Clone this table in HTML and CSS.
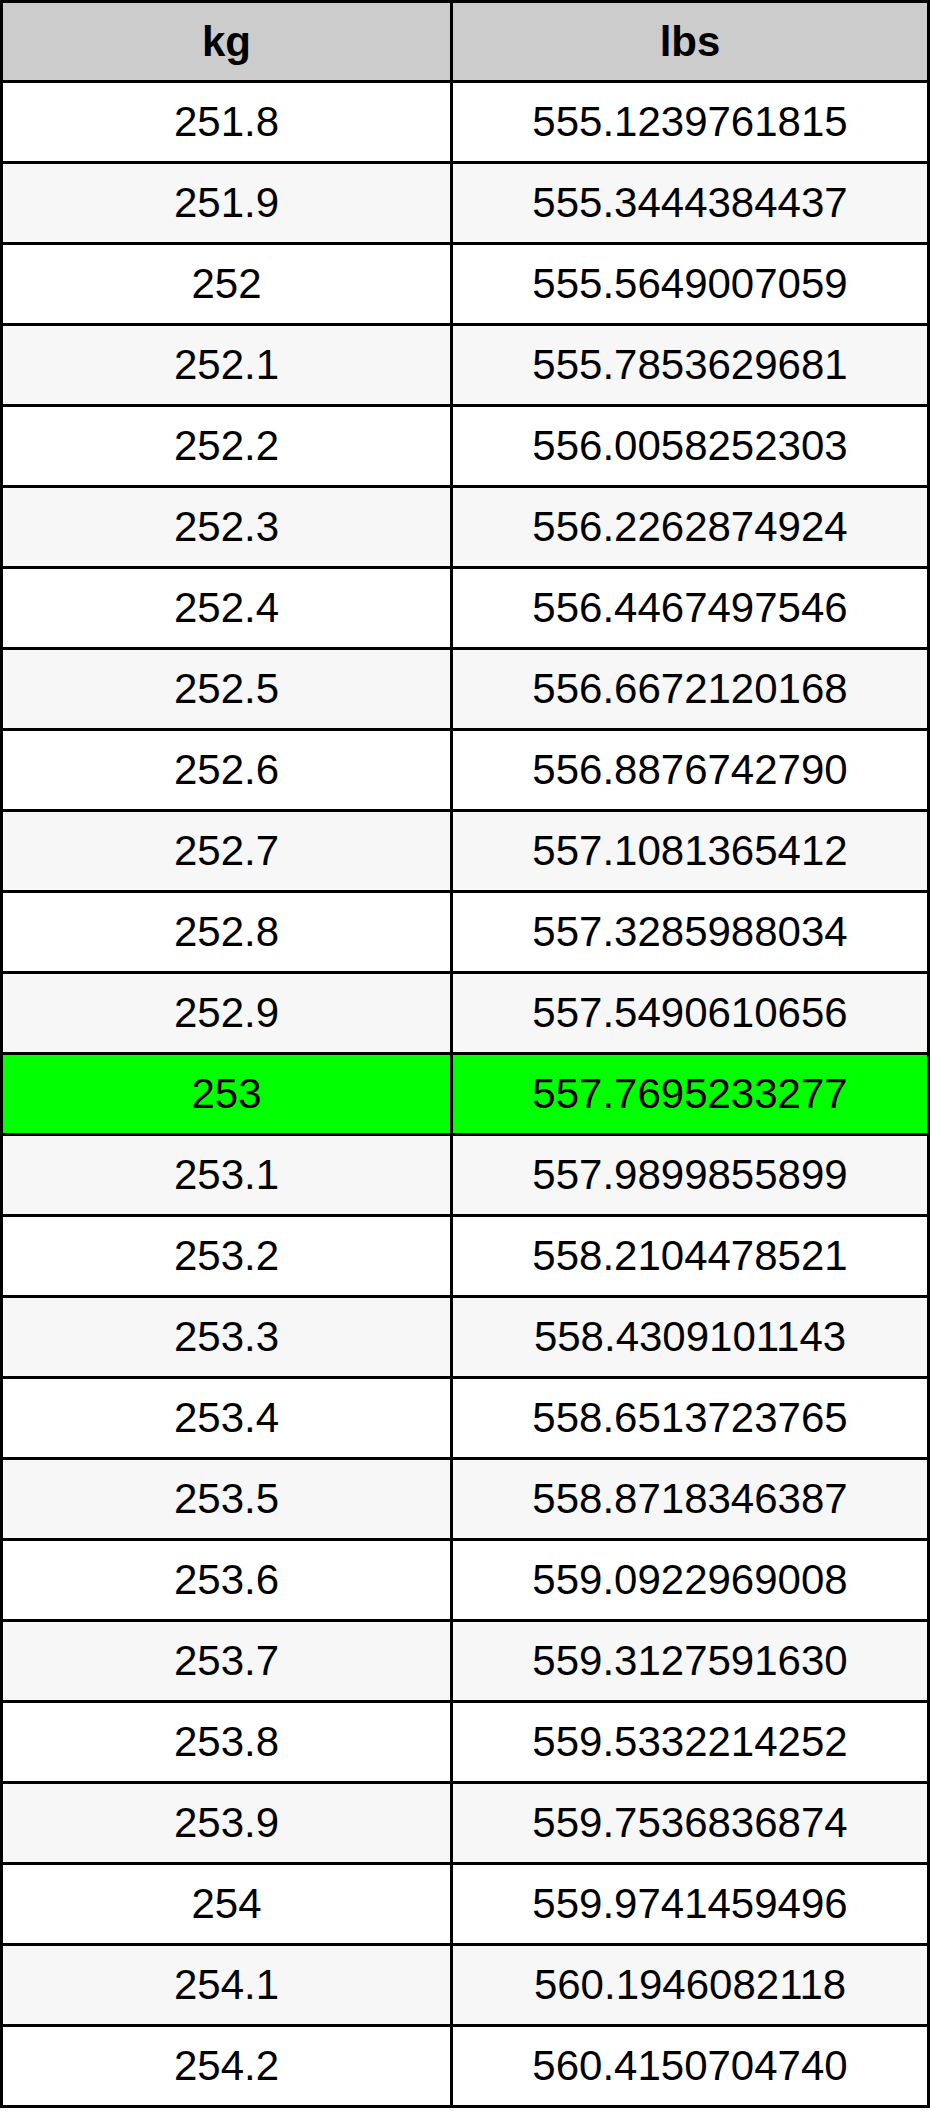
FILE: index.html
```html
<!DOCTYPE html>
<html lang="en">
<head>
<meta charset="utf-8">
<title>kg to lbs</title>
<link rel="stylesheet" href="styles.css">
</head>
<body>
<table class="conv">
  <thead>
    <tr><th class="c-kg">kg</th><th class="c-lbs">lbs</th></tr>
  </thead>
  <tbody>
    <tr><td>251.8</td><td>555.1239761815</td></tr>
    <tr><td>251.9</td><td>555.3444384437</td></tr>
    <tr><td>252</td><td>555.5649007059</td></tr>
    <tr><td>252.1</td><td>555.7853629681</td></tr>
    <tr><td>252.2</td><td>556.0058252303</td></tr>
    <tr><td>252.3</td><td>556.2262874924</td></tr>
    <tr><td>252.4</td><td>556.4467497546</td></tr>
    <tr><td>252.5</td><td>556.6672120168</td></tr>
    <tr><td>252.6</td><td>556.8876742790</td></tr>
    <tr><td>252.7</td><td>557.1081365412</td></tr>
    <tr><td>252.8</td><td>557.3285988034</td></tr>
    <tr><td>252.9</td><td>557.5490610656</td></tr>
    <tr class="hl"><td>253</td><td>557.7695233277</td></tr>
    <tr><td>253.1</td><td>557.9899855899</td></tr>
    <tr><td>253.2</td><td>558.2104478521</td></tr>
    <tr><td>253.3</td><td>558.4309101143</td></tr>
    <tr><td>253.4</td><td>558.6513723765</td></tr>
    <tr><td>253.5</td><td>558.8718346387</td></tr>
    <tr><td>253.6</td><td>559.0922969008</td></tr>
    <tr><td>253.7</td><td>559.3127591630</td></tr>
    <tr><td>253.8</td><td>559.5332214252</td></tr>
    <tr><td>253.9</td><td>559.7536836874</td></tr>
    <tr><td>254</td><td>559.9741459496</td></tr>
    <tr><td>254.1</td><td>560.1946082118</td></tr>
    <tr><td>254.2</td><td>560.4150704740</td></tr>
  </tbody>
</table>
</body>
</html>
```
FILE: styles.css
```css
html, body {
  margin: 0;
  padding: 0;
  background: #ffffff;
}

.conv {
  border-collapse: separate;
  border-spacing: 3px;
  background: #000000;
  font-family: "Liberation Sans", Arial, sans-serif;
  font-size: 42px;
  color: #000000;
  table-layout: fixed;
  width: 930px;
}

.conv th,
.conv td {
  padding: 0;
  text-align: center;
  vertical-align: middle;
  background: #ffffff;
  height: 78px;
  white-space: nowrap;
}

.conv th {
  background: #cccccc;
  font-weight: bold;
  height: 77px;
}

.c-kg {
  width: 447px;
}

.c-lbs {
  width: 474px;
}

.conv tbody tr:nth-child(even) td {
  background: #f7f7f7;
}

.conv tbody tr.hl td {
  background: #00ff00;
}
```
